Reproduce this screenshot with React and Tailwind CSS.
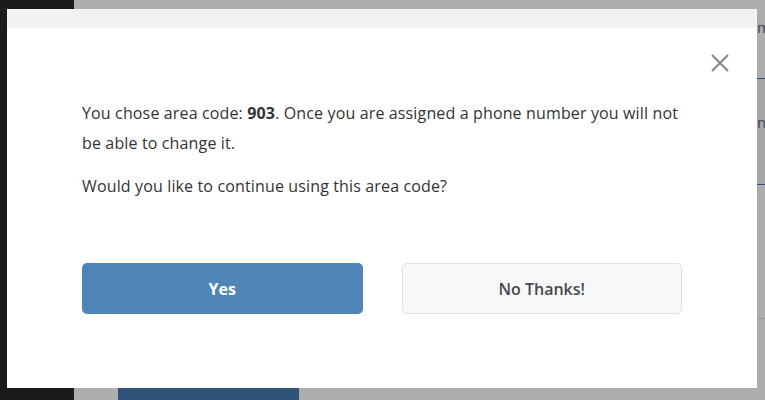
import React from "react";

export default function App() {
  return (
    <div className="relative w-[765px] h-[400px] overflow-hidden flex" style={{ fontFamily: '"Open Sans", "Liberation Sans", sans-serif' }}>
      {/* dim sidebar */}
      <div className="w-[74px] shrink-0 h-full bg-[#1b1b1b]" />
      {/* dim page behind */}
      <div className="flex-1 min-w-0 h-full bg-[#adadad] flex flex-col">
        <div className="h-[84px] pl-[683px] pt-[16px] text-[15px] text-[#3b4654] whitespace-nowrap overflow-hidden">mber</div>
        <div className="h-[115px] bg-[#a5a6a8] border-y border-[#2f5479] pl-[683px] pt-[32px] text-[15px] text-[#3b4654] whitespace-nowrap overflow-hidden">nge</div>
        <div className="h-[147px] border-b border-[#999999]" />
        <div className="pl-[44px] pt-[41px]">
          <div className="w-[181px] h-[40px] bg-[#2e5477]" />
        </div>
      </div>

      {/* modal */}
      <div className="absolute left-[7px] top-[9px] w-[750px] h-[379px] bg-white flex flex-col">
        <div className="h-[19px] bg-[#f2f2f2]" />
        <div className="relative flex-1 px-[75px] pt-[70px]">
          <button className="absolute right-[28px] top-[26px] w-[18px] h-[18px] text-[#8a8a8a]">
            <svg viewBox="0 0 18 18" className="w-[18px] h-[18px]" fill="none" stroke="currentColor" strokeWidth="2.2">
              <path d="M1 1 L17 17 M17 1 L1 17" />
            </svg>
          </button>
          <p className="text-[16px] leading-[30px] tracking-[0.14px] text-[#333333]">
            You chose area code: <b className="font-bold">903</b>. Once you are assigned a phone number you will not be able to change it.
          </p>
          <p className="mt-[13px] text-[16px] leading-[30px] tracking-[0.14px] text-[#333333]">
            Would you like to continue using this area code?
          </p>
          <div className="mt-[62px] flex gap-[39px]">
            <button className="w-[281px] h-[51px] rounded-[5px] bg-[#4f86b8] text-white text-[16px] font-bold">Yes</button>
            <button className="w-[281px] h-[51px] rounded-[5px] bg-[#f8f8f8] border border-[#e0e0e0] text-[#454a50] text-[16px] font-semibold">No Thanks!</button>
          </div>
        </div>
      </div>
    </div>
  );
}
